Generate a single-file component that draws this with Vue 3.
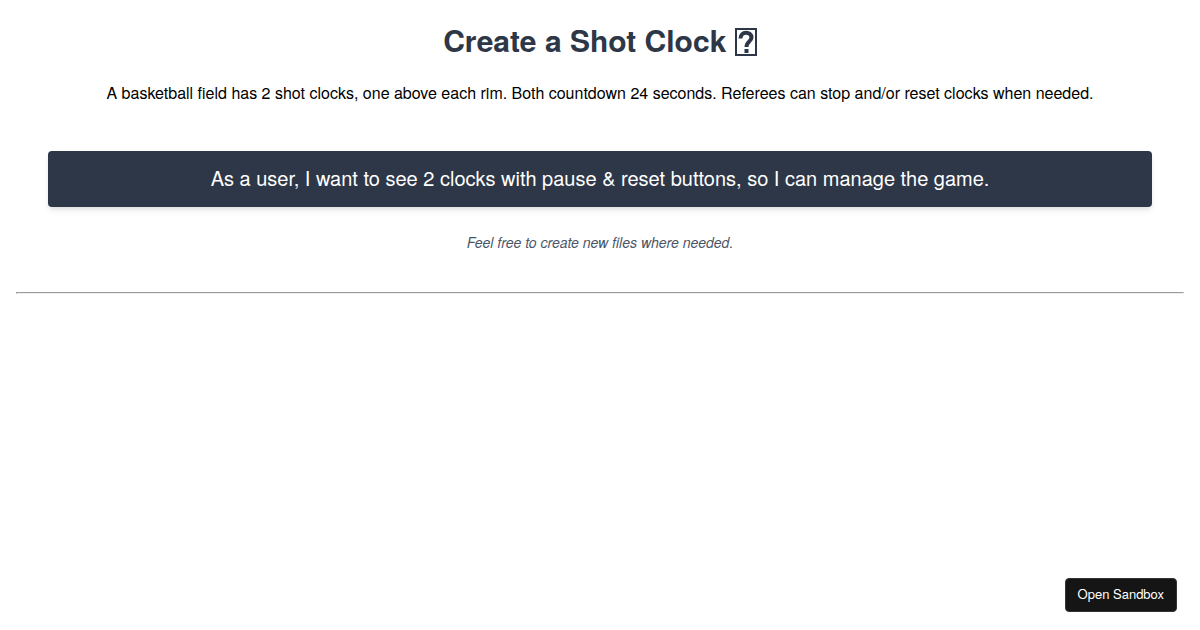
<template>
  <main class="page">
    <header class="intro">
      <h1>Create a Shot Clock <svg class="ball" viewBox="0 0 22 28" role="img" aria-label="Basketball"><path class="frame" d="M1 1H21V27H1Z" /><path class="mark" d="M5.5 10.5C5.5 3 16.5 3 16.5 9.5C16.5 13.5 11.5 13.5 11.5 19M11.5 21V25" /></svg></h1>
      <p class="lead">A basketball field has 2 shot clocks, one above each rim. Both countdown 24 seconds. Referees can stop and/or reset clocks when needed.</p>
      <p class="story">As a user, I want to see 2 clocks with pause &amp; reset buttons, so I can manage the game.</p>
      <p class="hint">Feel free to create new files where needed.</p>
    </header>
    <hr />
    <button class="sandbox" type="button">Open Sandbox</button>
  </main>
</template>

<script setup>
</script>

<style>
body {
  background: #fff;
}
</style>

<style scoped>
.page {
  padding: 16px;
  font-family: "TeX Gyre Heros", "Liberation Sans", Arial, sans-serif;
  font-size: 16px;
  line-height: 24px;
  color: #000;
  text-align: center;
}
.intro {
  padding: 6px 32px 38px;
}
h1 {
  margin: 0;
  font-size: 30px;
  line-height: 36px;
  font-weight: 700;
  color: #2d3748;
}
.ball {
  width: 22px;
  height: 28px;
  vertical-align: -4px;
  fill: none;
  stroke: currentColor;
}
.frame {
  stroke-width: 2;
}
.mark {
  stroke-width: 4;
}
p {
  margin: 0;
}
.lead {
  padding: 23px 0 46px;
}
.story {
  padding: 13px 16px 15px;
  border-radius: 4px;
  background: #2d3748;
  color: #fff;
  font-size: 20px;
  line-height: 28px;
  box-shadow: 0 4px 6px -1px rgba(0, 0, 0, 0.1), 0 2px 4px -1px rgba(0, 0, 0, 0.06);
}
.hint {
  margin-top: 23px;
  font-size: 14px;
  line-height: 24px;
  font-style: italic;
  color: #4a5568;
}
hr {
  margin: 0;
  border: 1px solid;
  border-color: #9a9a9a #eee #eee #9a9a9a;
}
.sandbox {
  position: fixed;
  right: 23px;
  bottom: 18px;
  height: 34px;
  padding: 0 12px 2px;
  border: 1px solid #343434;
  border-radius: 4px;
  background: #151515;
  color: #fff;
  font-family: inherit;
  font-size: 13px;
  line-height: 16px;
}
</style>
